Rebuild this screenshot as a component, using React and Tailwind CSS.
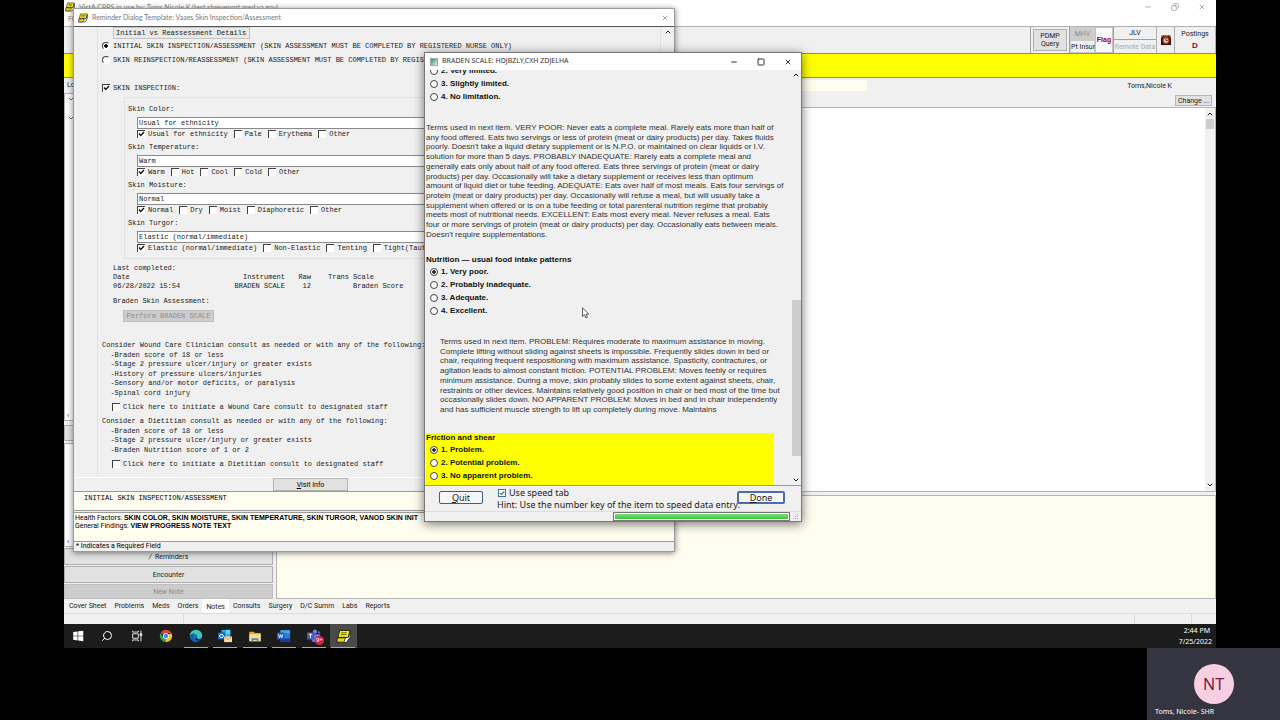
import React from 'react'
import { ChevronDown, ChevronUp, Copy, Minus, Search, Square, X } from 'lucide-react'

const skinGroups = [
  {
    label: 'Skin Color:',
    value: 'Usual for ethnicity',
    options: ['Usual for ethnicity', 'Pale', 'Erythema', 'Other'],
  },
  {
    label: 'Skin Temperature:',
    value: 'Warm',
    options: ['Warm', 'Hot', 'Cool', 'Cold', 'Other'],
  },
  {
    label: 'Skin Moisture:',
    value: 'Normal',
    options: ['Normal', 'Dry', 'Moist', 'Diaphoretic', 'Other'],
  },
  {
    label: 'Skin Turgor:',
    value: 'Elastic (normal/immediate)',
    options: ['Elastic (normal/immediate)', 'Non-Elastic', 'Tenting', 'Tight(Taut)'],
  },
]

const woundLines = [
  'Consider Wound Care Clinician consult as needed or with any of the following:',
  '  -Braden score of 18 or less',
  '  -Stage 2 pressure ulcer/injury or greater exists',
  '  -History of pressure ulcers/injuries',
  '  -Sensory and/or motor deficits, or paralysis',
  '  -Spinal cord injury',
]

const dietLines = [
  'Consider a Dietitian consult as needed or with any of the following:',
  '  -Braden score of 18 or less',
  '  -Stage 2 pressure ulcer/injury or greater exists',
  '  -Braden Nutrition score of 1 or 2',
]

const nutritionTerms = [
  'Terms used in next item. VERY POOR: Never eats a complete meal. Rarely eats more than half of',
  'any food offered. Eats two servings or less of protein (meat or dairy products) per day. Takes fluids',
  "poorly. Doesn't take a liquid dietary supplement or is N.P.O. or maintained on clear liquids or I.V.",
  'solution for more than 5 days. PROBABLY INADEQUATE: Rarely eats a complete meal and',
  'generally eats only about half of any food offered. Eats three servings of protein (meat or dairy',
  'products) per day. Occasionally will take a dietary supplement or receives less than optimum',
  'amount of liquid diet or tube feeding. ADEQUATE: Eats over half of most meals. Eats four servings of',
  'protein (meat or dairy products) per day. Occasionally will refuse a meal, but will usually take a',
  'supplement when offered or is on a tube feeding or total parenteral nutrition regime that probably',
  'meets most of nutritional needs. EXCELLENT: Eats most every meal. Never refuses a meal. Eats',
  'four or more servings of protein (meat or dairy products) per day. Occasionally eats between meals.',
  "Doesn't require supplementations.",
]

const frictionTerms = [
  'Terms used in next item. PROBLEM: Requires moderate to maximum assistance in moving.',
  'Complete lifting without sliding against sheets is impossible. Frequently slides down in bed or',
  'chair, requiring frequent respositioning with maximum assistance. Spasticity, contractures, or',
  'agitation leads to almost constant friction. POTENTIAL PROBLEM: Moves feebly or requires',
  'minimum assistance. During a move, skin probably slides to some extent against sheets, chair,',
  'restraints or other devices. Maintains relatively good position in chair or bed most of the time but',
  'occasionally slides down. NO APPARENT PROBLEM: Moves in bed and in chair independently',
  'and has sufficient muscle strength to lift up completely during move. Maintains',
]

const tabs = ['Cover Sheet', 'Problems', 'Meds', 'Orders', 'Notes', 'Consults', 'Surgery', 'D/C Summ', 'Labs', 'Reports']

function NoteIcon({ className }) {
  return (
    <svg viewBox="0 0 16 16" className={className} aria-hidden="true">
      <path d="M4 1.5h11l-2 7.5H2z" fill="#f7ee1c" stroke="#23230a" strokeWidth="1" />
      <path d="M2 9h11l2-6v6l-4 5.500H1z" fill="#fff" stroke="#23230a" strokeWidth="1" />
      <path d="M1.500 9.500h8.500l-1.500 4.500H1z" fill="#e6da12" stroke="#23230a" strokeWidth=".8" />
      <path d="M5.500 4h6M5 6h6" stroke="#55500a" strokeWidth=".9" />
    </svg>
  )
}

function ClassicCheck({ label, checked }) {
  return (
    <label className="flex h-[10px] items-center gap-[3px] whitespace-pre">
      <span className="relative h-2 w-2 shrink-0">
        <input
          type="checkbox"
          defaultChecked={checked}
          className="peer block h-2 w-2 appearance-none border-l border-t border-[#404040] bg-white"
        />
        <svg viewBox="0 0 8 8" className="pointer-events-none absolute inset-0 hidden peer-checked:block" aria-hidden="true">
          <path d="M2 3.500l1.800 2L7 2" fill="none" stroke="#111" strokeWidth="1.400" />
        </svg>
      </span>
      {label}
    </label>
  )
}

function ClassicRadio({ label, checked }) {
  return (
    <label className="flex h-[14px] items-center gap-[3px] whitespace-pre">
      <input
        type="radio"
        name="inspection"
        defaultChecked={checked}
        className="h-2 w-2 shrink-0 appearance-none rounded-full border border-b-white border-l-[#404040] border-r-white border-t-[#404040] bg-white checked:bg-[radial-gradient(circle,#000_1.5px,#fff_2px)]"
      />
      {label}
    </label>
  )
}

function BradenOptions({ name, options, selected }) {
  return options.map((option, i) => (
    <label key={option} className="flex h-[13px] items-center gap-[3px] pl-1 font-bold">
      <input
        type="radio"
        name={name}
        defaultChecked={i === selected}
        className="h-2 w-2 shrink-0 appearance-none rounded-full border border-[#444] bg-white checked:bg-[radial-gradient(circle,#222_1.5px,#fff_2px)]"
      />
      {option}
    </label>
  ))
}

function TextLines({ lines, className }) {
  return (
    <div className={`flex flex-col justify-between leading-[9px] whitespace-pre ${className}`}>
      {lines.map((line) => (
        <span key={line}>{line}</span>
      ))}
    </div>
  )
}

function ReminderDialog() {
  return (
    <section className="absolute left-[9px] top-2 flex h-[544px] w-[602px] flex-col border border-[#9a9a9a] bg-[#f0f0f0] font-['Roboto','Liberation_Sans',sans-serif] shadow-[0_1px_6px_rgba(0,0,0,0.5)]">
      <header className="flex h-[17px] shrink-0 items-center gap-1 bg-white px-1 font-['Lato','Noto_Sans',sans-serif] text-[7px] text-[#777]">
        <NoteIcon className="h-[10px] w-[10px]" />
        <h2 className="flex-1">Reminder Dialog Template: Vaaes Skin Inspection/Assessment</h2>
        <button aria-label="Close" className="p-px"><X className="h-2 w-2" strokeWidth={2} /></button>
      </header>

      <div className="flex h-[451px] shrink-0 overflow-hidden border-t border-[#555] font-['Liberation_Mono',monospace] text-[7px] leading-[10px] text-[#222]">
        <div className="ml-[23px] flex-1 border-l border-[#e2e2e2] pl-1">
          <div className="ml-[11px] w-[137px] border border-[#c4c4c4] bg-[#e9e9e9] pl-[2px]">Initial vs Reassessment Details</div>
          <ClassicRadio checked label="INITIAL SKIN INSPECTION/ASSESSMENT (SKIN ASSESSMENT MUST BE COMPLETED BY REGISTERED NURSE ONLY)" />
          <ClassicRadio label="SKIN REINSPECTION/REASSESSMENT (SKIN ASSESSMENT MUST BE COMPLETED BY REGISTERED NURSE ONLY)" />
          <div className="mt-4">
            <ClassicCheck checked label="SKIN INSPECTION:" />
          </div>

          <div className="ml-[22px] mt-1 flex h-[162px] flex-col gap-[3px] border border-[#e2e2e2] pl-[3px] pt-[6px]">
            {skinGroups.map((group) => (
              <div key={group.label}>
                <label htmlFor={group.label} className="block h-[10px]">{group.label}</label>
                <input
                  id={group.label}
                  defaultValue={group.value}
                  className="ml-[9px] mt-[3px] block h-3 w-[400px] border border-[#8a8a8a] bg-white px-px"
                />
                <div className="ml-[9px] flex gap-[6px]">
                  {group.options.map((option, i) => (
                    <ClassicCheck key={option} label={option} checked={i === 0} />
                  ))}
                </div>
              </div>
            ))}
          </div>

          <div className="ml-[11px] mt-[5px] leading-[9px]">
            <p>Last completed:</p>
            <table className="whitespace-pre">
              <thead>
                <tr className="text-right *:font-normal">
                  <th className="w-[87px] p-0 text-left">Date</th>
                  <th className="w-[85px] p-0">Instrument</th>
                  <th className="w-[26px] p-0">Raw</th>
                  <th className="w-[38px] p-0">Trans</th>
                  <th className="p-0 pl-1 text-left">Scale</th>
                </tr>
              </thead>
              <tbody>
                <tr className="text-right">
                  <td className="p-0 text-left">06/28/2022 15:54</td>
                  <td className="p-0">BRADEN SCALE</td>
                  <td className="p-0">12</td>
                  <td className="p-0" />
                  <td className="p-0 pl-1 text-left">Braden Score</td>
                </tr>
              </tbody>
            </table>
            <p className="mt-[6px]">Braden Skin Assessment:</p>
            <button disabled className="ml-[10px] mt-1 block h-3 w-[91px] border border-[#bdbdbd] bg-[#cccccc] text-[#8c8c8c]">
              Perform BRADEN SCALE
            </button>
          </div>

          <TextLines lines={woundLines} className="mt-[19px] h-[57px]" />
          <div className="ml-[10px] mt-1">
            <ClassicCheck label="Click here to initiate a Wound Care consult to designated staff" />
          </div>
          <TextLines lines={dietLines} className="mt-[5px] h-[38px]" />
          <div className="ml-[10px] mt-1">
            <ClassicCheck label="Click here to initiate a Dietitian consult to designated staff" />
          </div>
        </div>
        <div className="flex w-[14px] flex-col items-center border-l border-[#e2e2e2] pt-px">
          <ChevronUp className="h-2 w-2" strokeWidth={3} />
        </div>
      </div>

      <div className="flex h-[14px] shrink-0 border-t border-white pl-[199px]">
        <button className="w-[75px] border border-[#b5b5b5] bg-[#e1e1e1] text-[7px] leading-[10px]"><u>V</u>isit Info</button>
      </div>
      <div className="h-5 shrink-0 border-y border-[#9a9a9a] bg-[#fffcf0] pl-[10px] font-['Liberation_Mono',monospace] text-[7px] leading-[12px]">
        INITIAL SKIN INSPECTION/ASSESSMENT
      </div>
      <div className="mt-px flex-1 border-y border-[#9a9a9a] bg-[#fffcf0] px-px pt-px text-[7px] leading-2 whitespace-nowrap">
        <p>Health Factors: <b className="font-['Liberation_Sans',sans-serif]">SKIN COLOR, SKIN MOISTURE, SKIN TEMPERATURE, SKIN TURGOR, VANOD SKIN INIT</b></p>
        <p>General Findings: <b className="font-['Liberation_Sans',sans-serif]">VIEW PROGRESS NOTE TEXT</b></p>
      </div>
      <footer className="h-[9px] shrink-0 pl-[2px] text-[7px] leading-[9px]">* Indicates a Required Field</footer>
    </section>
  )
}

function BradenDialog() {
  return (
    <section className="absolute left-[360px] top-[52px] flex h-[470px] w-[378px] flex-col border border-[#777] bg-[#f0f0f0] shadow-[0_2px_10px_rgba(0,0,0,0.55)]">
      <header className="flex h-[17px] shrink-0 items-center bg-white pl-[5px] pr-[9px] font-['Noto_Sans','Open_Sans',sans-serif] text-[7px] text-[#333]">
        <span className="mr-1 h-2 w-2 border border-[#9aa] bg-linear-to-br from-[#2d8a72] to-[#dff0ea]" />
        <h2 className="flex-1">BRADEN SCALE: HDJBZLY,CXH ZDJELHA</h2>
        <div className="flex gap-[19px]">
          <button aria-label="Minimize"><Minus className="h-2 w-2" strokeWidth={3} /></button>
          <button aria-label="Maximize"><Square className="h-2 w-2" strokeWidth={3} /></button>
          <button aria-label="Close"><X className="h-2 w-2" strokeWidth={3} /></button>
        </div>
      </header>

      <div className="flex min-h-0 flex-1 overflow-hidden text-[8px] leading-[10px] text-[#111]">
        <div className="flex-1 whitespace-nowrap pl-px">
          <div className="-mt-[6px]">
            <BradenOptions name="sensory" selected={-1} options={['2. Very limited.', '3. Slightly limited.', '4. No limitation.']} />
          </div>
          <TextLines lines={nutritionTerms} className="mt-5 h-[116px] text-[#333]" />
          <h3 className="mt-4 font-bold">Nutrition — usual food intake patterns</h3>
          <BradenOptions
            name="nutrition"
            selected={0}
            options={['1. Very poor.', '2. Probably inadequate.', '3. Adequate.', '4. Excellent.']}
          />
          <TextLines lines={frictionTerms} className="ml-[14px] mt-5 h-[77px] text-[#333]" />
          <div className="mt-[19px] h-[60px] w-[348px] bg-[#ffff00]">
            <h3 className="font-bold">Friction and shear</h3>
            <BradenOptions
              name="friction"
              selected={0}
              options={['1. Problem.', '2. Potential problem.', '3. No apparent problem.']}
            />
          </div>
        </div>
        <div className="flex w-[10px] flex-col items-center py-px">
          <ChevronUp className="h-2 w-2" strokeWidth={3} />
          <div className="mt-auto h-[156px] w-[9px] bg-[#cdcdcd]" />
          <ChevronDown className="mt-5 h-2 w-2" strokeWidth={3} />
        </div>
      </div>

      <div className="flex h-[26px] shrink-0 items-start border-t border-[#999] pl-[14px] pr-4 font-['Noto_Sans','Open_Sans',sans-serif] text-[9px] leading-[12px] text-[#222]">
        <button className="mt-[5px] h-[13px] w-11 rounded-[2px] border border-[#3c5a96] bg-[#f6f6f6] leading-[11px]"><u>Q</u>uit</button>
        <div className="ml-[14px] mt-px w-0 flex-1 whitespace-nowrap">
          <label className="flex h-3 items-center gap-[3px] pl-px">
            <span className="relative h-2 w-2">
              <input type="checkbox" defaultChecked className="peer block h-2 w-2 appearance-none border border-[#3c6e9c] bg-white" />
              <svg viewBox="0 0 8 8" className="pointer-events-none absolute inset-0 hidden peer-checked:block" aria-hidden="true">
                <path d="M2 4l1.500 1.500L6.200 2.500" fill="none" stroke="#2a9a3a" strokeWidth="1.200" />
              </svg>
            </span>
            Use speed tab
          </label>
          <p>Hint: Use the number key of the item to speed data entry.</p>
        </div>
        <button className="mt-[5px] h-[13px] w-12 rounded-[2px] border-2 border-[#4a6cb0] bg-[#f6f6f6] leading-[9px]"><u>D</u>one</button>
      </div>
      <footer className="flex h-[10px] shrink-0 items-stretch justify-end gap-px border-t border-[#ddd] pr-[2px]">
        <div className="w-[177px] border border-[#777] bg-white p-px">
          <div className="h-full w-full bg-linear-to-b from-[#7be27b] to-[#36c436]" />
        </div>
        <svg viewBox="0 0 8 8" className="h-2 w-2" aria-hidden="true">
          <path d="M6 2h1v1H6zM4 4h1v1H4zM6 4h1v1H6zM2 6h1v1H2zM4 6h1v1H4zM6 6h1v1H6z" fill="#aaa" />
        </svg>
      </footer>
    </section>
  )
}

function CprsWindow() {
  return (
    <main className="flex min-h-0 flex-1 flex-col bg-[#f0f0f0] font-['Roboto','Liberation_Sans',sans-serif] text-[7px] leading-2 text-[#222]">
      <header className="flex h-[13px] shrink-0 items-center gap-1 bg-white pl-px pr-[10px] font-['Lato','Noto_Sans',sans-serif] text-[#888]">
        <NoteIcon className="h-[10px] w-[10px]" />
        <h1 className="flex-1">VistA CPRS in use by: Toms,Nicole K (test.shreveport.med.va.gov)</h1>
        <div className="flex gap-[19px]">
          <button aria-label="Minimize"><Minus className="h-2 w-2" /></button>
          <button aria-label="Restore"><Copy className="h-2 w-2 -scale-x-100" /></button>
          <button aria-label="Close"><X className="h-2 w-2" /></button>
        </div>
      </header>
      <nav className="h-[13px] shrink-0 bg-white pl-1 pt-[2px] text-[#888]">File</nav>

      <div className="flex h-[27px] shrink-0 items-stretch justify-end border-t border-[#b0b0b0] text-center">
        <div className="flex border-l border-[#a0a0a0] p-[2px]">
          <button className="w-[34px] border border-[#b0b0b0] bg-[#e1e1e1]">PDMP<br />Query</button>
        </div>
        <div className="flex w-[26px] flex-col border-l border-[#a0a0a0]">
          <button disabled className="h-[13px] bg-[#cccccc] text-[#8c8c8c]">MHV</button>
          <button className="h-[13px] border border-[#ccc] whitespace-nowrap">Pt Insur</button>
        </div>
        <button className="w-[18px] border border-[#c4c4c4] bg-[#f8f8f8] font-['Liberation_Sans',sans-serif] font-bold text-[#a00010]">Flag</button>
        <div className="flex w-[43px] flex-col border-l border-[#a0a0a0]">
          <button className="h-[13px] border-b border-[#a0a0a0]">JLV</button>
          <button disabled className="h-[13px] whitespace-nowrap text-[#aaa]">Remote Data</button>
        </div>
        <button aria-label="Reminders due" className="flex w-[18px] items-center justify-center border-l border-[#b0b0b0]">
          <svg viewBox="0 0 10 10" className="h-[10px] w-[10px]">
            <path d="M0 0h10v10H0z" fill="#2c1408" />
            <path d="M0 0h3L0 3zM10 0H7l3 3z" fill="#9fb43c" />
            <circle cx="5" cy="5.500" r="3" fill="#f6d8c8" stroke="#d2281e" strokeWidth="1.400" />
            <path d="M5 3.500v2h1.500" fill="none" stroke="#111" strokeWidth=".9" />
            <path d="M3 .8h4" stroke="#e0b030" />
          </svg>
        </button>
        <button className="w-[42px] border-x border-[#b0b0b0]">
          <span className="block leading-[11px]">Postings</span>
          <b className="block font-['Liberation_Sans',sans-serif] text-[8px] leading-[11px] text-[#a00010]">D</b>
        </button>
      </div>
      <div className="h-[25px] shrink-0 border-y border-[#888] bg-[#ffff00]" />

      <div className="flex min-h-0 flex-1">
        <aside className="flex w-[209px] shrink-0 flex-col">
          <p className="pl-[3px] leading-[15px]">Location</p>
          <div className="flex h-[328px] flex-col border border-[#b0b0b0] bg-white pl-[2px]">
            <ChevronDown className="mt-px h-2 w-2" />
            <ChevronDown className="mt-[11px] h-2 w-2" />
            <span className="mt-auto">‹</span>
          </div>
          <button aria-label="Templates" className="mt-1 h-4 border border-[#adadad] bg-[#e1e1e1]" />
          <div className="mb-px mt-[2px] flex flex-1 flex-col justify-end border border-[#b0b0b0] bg-white pl-[2px]">‹</div>
          <button className="h-[17px] border border-[#adadad] bg-[#e1e1e1] pt-px"><i>/</i> &nbsp;Reminders</button>
          <button className="mt-px h-[17px] border border-[#adadad] bg-[#e1e1e1]">Encounter</button>
          <button disabled className="mt-px h-[15px] border border-[#bfbfbf] bg-[#cccccc] text-[#8c8c8c]">New Note</button>
        </aside>

        <div className="ml-[3px] flex min-w-0 flex-1 flex-col">
          <div className="flex h-[29px] shrink-0 items-start">
            <div className="mt-[2px] h-[11px] w-[591px] bg-[#fffcf0]" />
            <div className="ml-auto flex h-full flex-col items-end pr-1">
              <span className="mr-10 mt-1">Toms,Nicole K</span>
              <button className="mb-px mt-auto h-[11px] w-[37px] border border-[#b5b5b5] bg-[#e1e1e1]">Change ...</button>
            </div>
          </div>
          <div className="flex min-h-0 flex-1 border border-[#b5b5b5] bg-white">
            <div className="ml-auto flex w-[10px] flex-col items-center bg-[#f0f0f0] py-[2px]">
              <ChevronUp className="h-2 w-2" strokeWidth={3} />
              <div className="mt-px h-[10px] w-[8px] bg-[#cdcdcd]" />
              <ChevronDown className="mt-auto h-2 w-2" strokeWidth={3} />
            </div>
          </div>
          <div className="mt-[3px] h-[104px] shrink-0 border border-[#b5b5b5] bg-[#fffcf0]" />
        </div>
      </div>

      <nav className="flex h-[14px] shrink-0 items-stretch pl-px">
        {tabs.map((tab) => (
          <a
            key={tab}
            href="#"
            className={tab === 'Notes' ? 'bg-white px-1 pt-1' : 'px-1 pt-[3px]'}
          >
            {tab}
          </a>
        ))}
      </nav>
      <footer className="flex h-[11px] shrink-0 border-t border-[#dcdcdc]">
        <span className="w-[120px] border-r border-[#dcdcdc]" />
        <span className="flex-1 border-r border-[#dcdcdc]" />
        <span className="w-[57px] border-r border-[#dcdcdc]" />
        <span className="w-6" />
      </footer>
    </main>
  )
}

const taskbarItems = [
  {
    name: 'Start',
    icon: <path d="M2.500 3.500l5-.7V7.600h-5zM8.200 2.700l5.800-.8v5.700H8.200zM2.500 8.300h5v4.800l-5-.7zM8.200 8.300H14V14l-5.800-.8z" fill="#fff" />,
  },
  { name: 'Search' },
  {
    name: 'Task View',
    icon: (
      <g fill="none" stroke="#e5e5e5" strokeWidth="1.100">
        <path d="M3 5.500h6.500v5H3zM3 2v1.500h6.500V2M3 14v-1.500h6.500V14M12.500 2v12" />
        <path d="M11.500 5.500h2v2h-2z" fill="#e5e5e5" />
      </g>
    ),
  },
  {
    name: 'Chrome',
    icon: (
      <g>
        <path d="M8 8L1.900 4.500A7 7 0 0 1 14.100 4.500H8z" fill="#e34133" />
        <path d="M8 8l6.100-3.500A7 7 0 0 1 8 15l-1.500-2z" fill="#fbc116" />
        <path d="M8 8v7A7 7 0 0 1 1.900 4.500L5 9.500z" fill="#31a350" />
        <circle cx="8" cy="8" r="3.400" fill="#fff" />
        <circle cx="8" cy="8" r="2.600" fill="#4285f4" />
      </g>
    ),
  },
  {
    name: 'Edge',
    open: true,
    icon: (
      <g>
        <circle cx="8" cy="8" r="7" fill="#1477c9" />
        <path d="M1 8a7 7 0 0 1 14-.5c0 2.500-2 3.500-4 3.500-1.500 0-2-.7-1.500-1.500C10.500 7.500 8 5 5.500 5.500 3 6 1.500 7 1 8z" fill="#41c9b4" />
        <path d="M1 8c.5-2 3-3.500 5.500-2.500C4.500 7 4.500 10 6 12c1 1.500 3 2.500 5 2A7 7 0 0 1 1 8z" fill="#0d5fb0" />
        <path d="M14.300 11.200c-1 .7-3.800 1-5.300-.2-.5-.5-.7-1.200-.5-2C6 10 8 14 11.500 13.500c1.200-.4 2.200-1.200 2.800-2.300z" fill="#1a1a1a" />
      </g>
    ),
  },
  {
    name: 'Outlook',
    open: true,
    icon: (
      <g>
        <path d="M4 1h10v10H4z" fill="#28a8ea" />
        <path d="M9 1h5v5H9z" fill="#50d9ff" />
        <path d="M0 4h8v8H0z" fill="#0f64b8" />
        <circle cx="4" cy="8" r="2" fill="none" stroke="#fff" strokeWidth="1.200" />
        <path d="M7 8.500h9V15H7z" fill="#fbd9a0" />
        <path d="M7 8.500l4.500 3.500L16 8.500" fill="none" stroke="#d08a2c" strokeWidth=".9" />
      </g>
    ),
  },
  {
    name: 'File Explorer',
    open: true,
    icon: (
      <g>
        <path d="M1.500 3h5l1.500 1.500h6.500V14h-13z" fill="#e6a93a" />
        <path d="M1.500 6h13v8h-13z" fill="#fcdc82" />
        <path d="M4 14v-3.500h8V14h-2v-1.500H6V14z" fill="#3c8fd6" />
      </g>
    ),
  },
  {
    name: 'Word',
    open: true,
    icon: (
      <g>
        <path d="M4 1.500h11v13H4z" fill="#2b7cd3" />
        <path d="M4 1.500h11V5H4z" fill="#41a5ee" />
        <path d="M4 11h11v3.500H4z" fill="#103f91" />
        <path d="M0 4h8.500v8H0z" fill="#185abd" />
        <path d="M1.800 6l1.100 4 1.300-3.500L5.500 10l1.200-4" fill="none" stroke="#fff" strokeWidth="1" />
      </g>
    ),
  },
  {
    name: 'Teams',
    open: true,
    badge: '9+',
    icon: (
      <g>
        <circle cx="9" cy="3" r="2.300" fill="#7b83eb" />
        <circle cx="13.500" cy="4" r="1.500" fill="#5059c9" />
        <path d="M5 6h10v5a4 4 0 0 1-4 4H9a4 4 0 0 1-4-4z" fill="#6a72dc" />
        <path d="M0 4h8v8H0z" fill="#4b53bc" />
        <path d="M2 6h4M4 6v4.500" stroke="#fff" strokeWidth="1.100" />
      </g>
    ),
  },
  { name: 'CPRS', open: true, active: true },
]

function Taskbar() {
  return (
    <div className="flex h-6 shrink-0 items-stretch justify-between bg-[#1c1c1c] font-['Noto_Sans','Open_Sans',sans-serif] text-[7px] text-white">
      <div className="flex w-[293px] justify-between">
        {taskbarItems.map((item) => (
          <button
            key={item.name}
            aria-label={item.name}
            className={`flex w-[27px] flex-col items-center justify-between ${item.active ? 'bg-[#4a4a4a]' : ''}`}
          >
            <span className="relative mt-[5px]">
              {item.name === 'Search' && <Search className="m-px h-3 w-3 -scale-x-100" strokeWidth={2} />}
              {item.name === 'CPRS' && <NoteIcon className="h-[15px] w-[15px]" />}
              {item.icon && <svg viewBox="0 0 16 16" className="h-[14px] w-[14px]">{item.icon}</svg>}
              {item.badge && (
                <span className="absolute -bottom-[2px] -right-[3px] h-[9px] w-[9px] rounded-full bg-[#d3263c] text-[6px] leading-[9px]">{item.badge}</span>
              )}
            </span>
            {item.open && <span className="h-px w-6 bg-[#76b9ed]" />}
          </button>
        ))}
      </div>
      <div className="pr-1 pt-px text-right leading-[11px]">
        <p className="pr-[2px]">2:44 PM</p>
        <p>7/25/2022</p>
      </div>
    </div>
  )
}

export default function App() {
  return (
    <div className="flex h-screen flex-col bg-black font-['Liberation_Sans',sans-serif]">
      {/* Shared desktop */}
      <div className="relative mx-16 flex min-h-0 flex-1 flex-col overflow-hidden">
        <CprsWindow />
        <ReminderDialog />
        <BradenDialog />
        <Taskbar />
        <svg viewBox="0 0 8 12" className="pointer-events-none absolute left-[518px] top-[307px] h-3 w-2" aria-hidden="true">
          <path d="M.5.8v8.700l2-1.800 1.400 3.300 1.500-.7L4 7.200h2.800z" fill="#fff" stroke="#333" strokeWidth=".8" />
        </svg>
      </div>

      {/* Call participant */}
      <div className="flex h-[72px] shrink-0 justify-end">
        <div className="flex w-[133px] flex-col items-center justify-between bg-[#343541] pt-4 font-['Noto_Sans','Open_Sans',sans-serif]">
          <div className="flex h-10 w-10 items-center justify-center rounded-full bg-[#f7cfe1] text-base text-[#701a3c]">NT</div>
          <p className="self-start pb-[3px] pl-2 text-[7px] leading-[10px] text-white">Toms, Nicole- SHR</p>
        </div>
      </div>
    </div>
  )
}
